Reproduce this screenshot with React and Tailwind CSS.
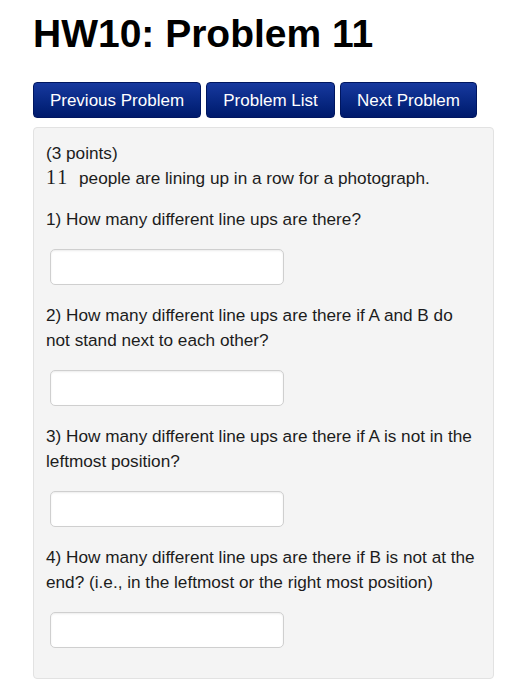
import React from 'react';

// nav buttons under the title
const NavButton = ({ label, width }) => (
  <button
    type="button"
    className={`h-[36px] ${width} rounded-[4px] border border-[#001660] bg-gradient-to-b from-[#17399f] to-[#001a6c] text-[17px] text-white leading-none`}
  >
    {label}
  </button>
);

const AnswerBox = () => (
  <input
    type="text"
    className="mt-[17px] ml-[4px] block h-[36px] w-[234px] rounded-[5px] border border-[#cfcfcf] bg-white shadow-[inset_0_1px_2px_rgba(0,0,0,0.08)] outline-none"
  />
);

const questions = [
  '1) How many different line ups are there?',
  '2) How many different line ups are there if A and B do not stand next to each other?',
  '3) How many different line ups are there if A is not in the leftmost position?',
  '4) How many different line ups are there if B is not at the end? (i.e., in the leftmost or the right most position)',
];

const App = () => {
  return (
    <div className="min-h-[700px] w-[510px] bg-white font-['Liberation_Sans',Arial,sans-serif] text-[#1c1c1c]">
      <h1 className="pl-[33px] pt-[12px] text-[39px] font-bold leading-[44px] text-black">
        HW10: Problem 11
      </h1>

      {/* Navigasi soal */}
      <div className="mt-[26px] ml-[33px] flex gap-[5px]">
        <NavButton label="Previous Problem" width="w-[168px]" />
        <NavButton label="Problem List" width="w-[129px]" />
        <NavButton label="Next Problem" width="w-[137px]" />
      </div>

      {/* Panel soal */}
      <div className="mt-[9px] ml-[33px] w-[461px] rounded-[4px] border border-[#e2e2e2] bg-[#f4f4f4] pt-[13px] pb-[30px] pl-[12px] pr-[15px] text-[17.2px]">
        <p className="leading-6">(3 points)</p>
        <p className="leading-6">
          <span className="mr-[5px] font-['Liberation_Serif','Times_New_Roman',serif] text-[20px] tracking-[2px]">11</span>
          {' '}people are lining up in a row for a photograph.
        </p>

        <p className="mt-[17px] leading-[25px]">{questions[0]}</p>
        <AnswerBox />

        {questions.slice(1).map((q) => (
          <div key={q}>
            <p className="mt-[18px] leading-[25px]">{q}</p>
            <AnswerBox />
          </div>
        ))}
      </div>
    </div>
  );
};

export default App;
